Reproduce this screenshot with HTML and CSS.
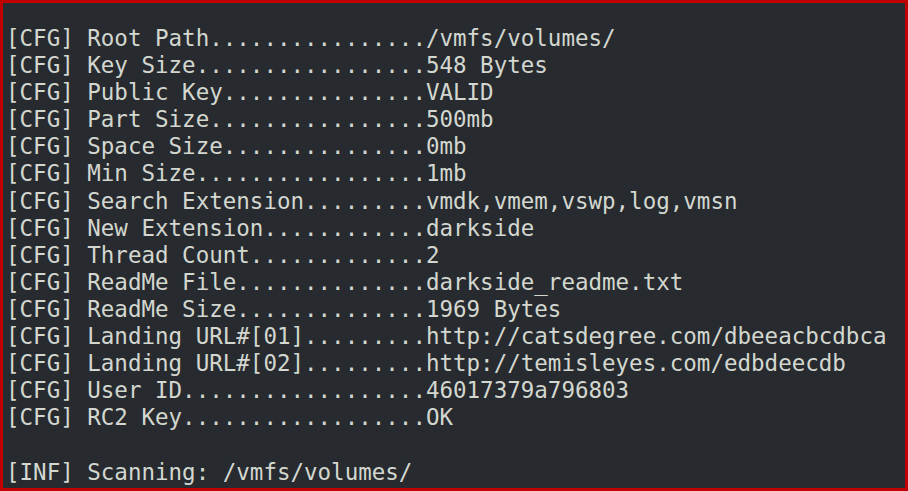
FILE: index.html
```html
<!DOCTYPE html>
<html>
<head>
<meta charset="utf-8">
<link rel="stylesheet" href="styles.css">
</head>
<body>
<div class="term">
<pre class="out">[CFG] Root Path................/vmfs/volumes/
[CFG] Key Size.................548 Bytes
[CFG] Public Key...............VALID
[CFG] Part Size................500mb
[CFG] Space Size...............0mb
[CFG] Min Size.................1mb
[CFG] Search Extension.........vmdk,vmem,vswp,log,vmsn
[CFG] New Extension............darkside
[CFG] Thread Count.............2
[CFG] ReadMe File..............darkside_readme.txt
[CFG] ReadMe Size..............1969 Bytes
[CFG] Landing URL#[01].........http://catsdegree.com/dbeeacbcdbca
[CFG] Landing URL#[02].........http://temisleyes.com/edbdeecdb
[CFG] User ID..................46017379a796803
[CFG] RC2 Key..................OK

[INF] Scanning: /vmfs/volumes/</pre>
</div>
</body>
</html>
```
FILE: styles.css
```css
html, body {
  margin: 0;
  padding: 0;
  background: #272b2f;
}
.term {
  box-sizing: border-box;
  width: 908px;
  height: 491px;
  border: 3px solid #c00000;
  background: #272b2f;
  overflow: hidden;
  padding: 22px 0 0 3px;
}
.out {
  margin: 0;
  font-family: "DejaVu Sans Mono", monospace;
  font-size: 22.5px;
  line-height: 27.1px;
  color: #d3d7cf;
  white-space: pre;
}
```
